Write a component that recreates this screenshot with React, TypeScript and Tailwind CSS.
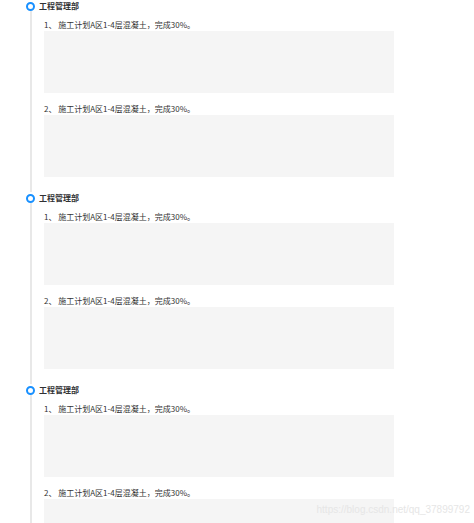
import React from 'react';

const sections = [1, 2, 3];
const items = ['1、 施工计划A区1-4层混凝土，完成30%。', '2、 施工计划A区1-4层混凝土，完成30%。'];

const Section: React.FC = () => (
  <div className="flex gap-[4px]">
    <div className="flex w-[9px] flex-col items-center">
      <div className="mt-[1.5px] h-[9px] w-[9px] shrink-0 rounded-full border-[2px] border-[#1890ff] bg-white" />
      <div className="w-[2px] flex-1 bg-[#e8e8e8]" />
    </div>
    <div className="flex-1 pb-[15px]">
      <div className="h-[12px] text-[8px] leading-[12px] font-semibold text-[#303133]">工程管理部</div>
      {items.map((t, i) => (
        <div key={i} className={i === 0 ? 'mt-[7px] ml-[5px]' : 'mt-[10px] ml-[5px]'}>
          <div className="h-[12px] text-[8px] leading-[12px] text-[#333] whitespace-pre">{t}</div>
          <div className="h-[62px] w-[350px] bg-[#f5f5f5]" />
        </div>
      ))}
    </div>
  </div>
);

export default function App() {
  return (
    <div
      className="relative h-[523px] w-[474px] overflow-hidden bg-white pl-[26px]"
      style={{ fontFamily: '"Noto Sans CJK SC", "Noto Sans", sans-serif' }}
    >
      {sections.map((s) => (
        <Section key={s} />
      ))}
      <div className="absolute right-[4px] bottom-[6px] text-[10px] text-[#e6e6e6]" style={{ fontFamily: '"Liberation Sans", sans-serif' }}>
        https://blog.csdn.net/qq_37899792
      </div>
    </div>
  );
}
